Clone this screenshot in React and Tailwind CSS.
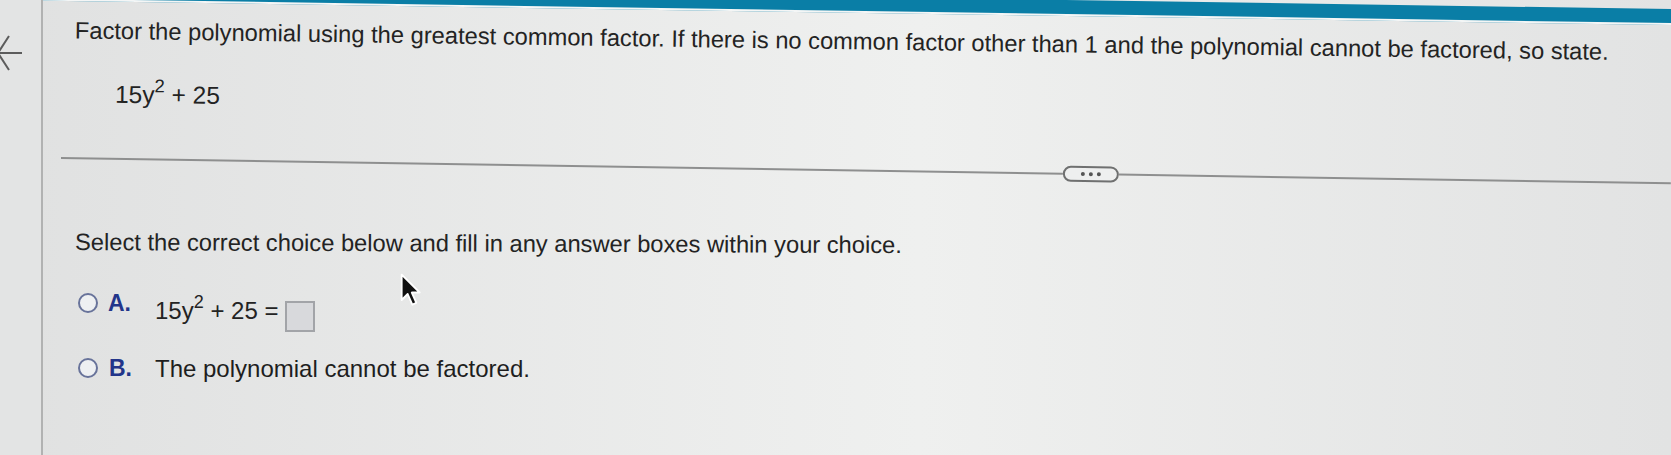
import React from "react";

// Math-quiz screen: "factor using the GCF" question with two choices
function Radio() {
    return <span className="mt-[3px] h-[20px] w-[20px] shrink-0 rounded-full border-2 border-[#68739a] bg-[#eef0f2]" />;
}

function Cursor() {
    return (
        <svg className="absolute left-[399px] top-[272px]" width="24" height="36" viewBox="0 0 18 27">
            <path
                d="M2 2 L2 21 L6.5 16.5 L10 24.5 L13 23.2 L9.6 15.4 L15.5 15.4 Z"
                fill="#111"
                stroke="#fff"
                strokeWidth="1.4"
                strokeLinejoin="round"
            />
        </svg>
    );
}

export default function App() {
    return (
        <div className="relative flex h-[455px] w-[1671px] overflow-hidden bg-linear-to-r from-[#e0e1e1] via-[#eff0ef] via-55% to-[#e2e3e3] font-['Liberation_Sans',Arial,sans-serif] text-[#232323]">
            {/* teal header strip, tilted like the photo */}
            <div className="absolute left-0 top-0 h-[16px] w-[1700px] -translate-y-full origin-bottom-left rotate-[0.86deg] border-b-2 border-[#f4f6f6] bg-[#0a7ea6]" />

            {/* left rail with back arrow */}
            <div className="relative w-[43px] shrink-0 border-r-2 border-[#b1b2b2] bg-[#e3e4e4]">
                <svg className="absolute left-0 top-[34px]" width="26" height="40" viewBox="0 0 26 40">
                    <path d="M0 19 L22 19 M9 2 L-2 19 L9 36" fill="none" stroke="#5c5c5c" strokeWidth="2" />
                </svg>
            </div>

            {/* question area */}
            <div className="flex flex-1 flex-col">
                <p className="origin-left rotate-[0.8deg] pl-[32px] pt-[17px] text-[23.7px] leading-[27px]">
                    Factor the polynomial using the greatest common factor. If there is no common factor other than 1 and
                    the polynomial cannot be factored, so state.
                </p>

                <p className="mt-[36px] origin-left rotate-[0.6deg] pl-[72px] text-[24.5px] leading-[27px]">
                    15y<sup className="-top-[0.6em]">2</sup> + 25
                </p>

                <div className="ml-[18px] mt-[43px] flex h-[16px] origin-left rotate-[0.9deg] items-center">
                    <div className="h-[2px] w-[1002px] bg-[#8e8f8f]" />
                    <div className="flex h-[16px] w-[56px] shrink-0 items-center justify-center gap-[4px] rounded-full border-2 border-[#6f7070] bg-[#eeefef]">
                        <span className="h-[4px] w-[4px] rounded-full bg-[#555]" />
                        <span className="h-[4px] w-[4px] rounded-full bg-[#555]" />
                        <span className="h-[4px] w-[4px] rounded-full bg-[#555]" />
                    </div>
                    <div className="h-[2px] flex-1 bg-[#8e8f8f]" />
                </div>

                <p className="mt-[63px] origin-left rotate-[0.2deg] pl-[32px] text-[23.7px] leading-[27px]">
                    Select the correct choice below and fill in any answer boxes within your choice.
                </p>

                {/* choice A */}
                <div className="mt-[34px] flex items-start pl-[35px]">
                    <Radio />
                    <span className="ml-[10px] w-[47px] text-[23px] font-bold leading-[27px] text-[#22358a]">A.</span>
                    <span className="mt-[7px] text-[24px] leading-[27px]">
                        15y<sup className="-top-[0.6em]">2</sup> + 25 =
                    </span>
                    <span className="ml-[7px] mt-[11px] h-[31px] w-[30px] border-2 border-[#a2a4a8] bg-[#d8d9dc]" />
                </div>

                {/* choice B */}
                <div className="mt-[23px] flex items-start pl-[35px]">
                    <Radio />
                    <span className="ml-[11px] w-[46px] text-[23px] font-bold leading-[27px] text-[#22358a]">B.</span>
                    <span className="text-[24px] leading-[27px] text-[#1e1e1e]">The polynomial cannot be factored.</span>
                </div>
            </div>

            <Cursor />
        </div>
    );
}
